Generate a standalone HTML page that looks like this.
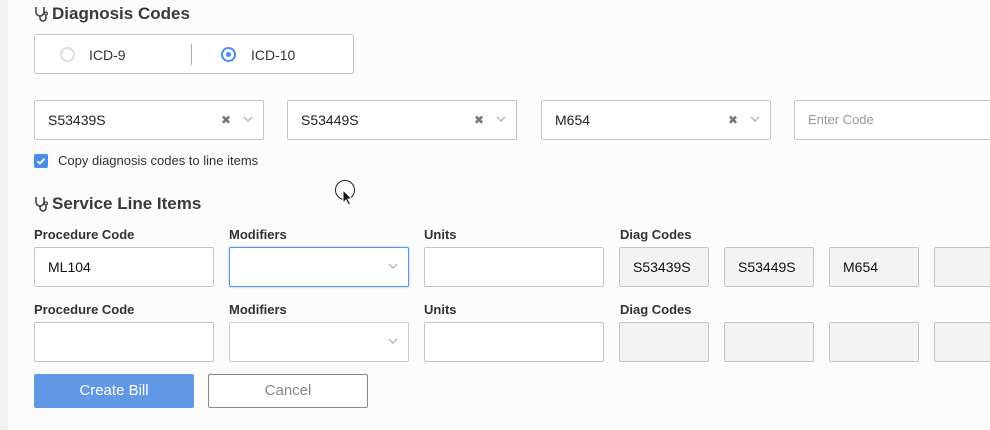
<!DOCTYPE html>
<html><head><style>
*{box-sizing:border-box;margin:0;padding:0}
body{width:990px;height:430px;overflow:hidden;background:#fcfcfc;font-family:"Liberation Sans",sans-serif;color:#333;position:relative}
.strip{position:absolute;left:0;top:0;width:8px;height:430px;background:#f1f1f1}
.a{position:absolute}
.h{font-size:17px;font-weight:bold;color:#3a3a3a;display:flex;align-items:center;gap:4px}
.box{position:absolute;border:1px solid #c4c4c4;border-radius:2px;background:#fff;height:40px}
.sel{font-size:14px;color:#222;padding-left:13px;line-height:38px}
.x{position:absolute;top:0;right:32px;font-size:12px;color:#777;line-height:38px}
.chev{position:absolute;right:10px;top:15px}
.lbl{position:absolute;font-size:13px;font-weight:bold;color:#333}
.g{background:#f3f3f3;height:40px}
.in{font-size:14px;color:#111;padding-left:13px;line-height:38px}
</style></head><body>
<div class="strip"></div>
<svg width="0" height="0" style="position:absolute"><defs>
<symbol id="st" viewBox="0 0 14 16"><path d="M2 1v5a4 4 0 0 0 8 0V1M6 10v2a3 3 0 0 0 6 0V9" fill="none" stroke="#444" stroke-width="1.6"/><circle cx="12" cy="7.5" r="1.5" fill="none" stroke="#444" stroke-width="1.3"/></symbol>
<symbol id="cv" viewBox="0 0 10 6"><path d="M1 1l4 4 4-4" fill="none" stroke="#aaa" stroke-width="1.2"/></symbol>
</defs></svg>
<div class="a h" style="left:34px;top:4px"><svg width="14" height="16"><use href="#st"/></svg>Diagnosis Codes</div>
<div class="box" style="left:34px;top:34px;width:320px;height:40px;border-radius:3px"></div>
<div class="a" style="left:60px;top:47px;width:15px;height:15px;border:2px solid #ddd;border-radius:50%"></div>
<div class="a" style="left:89px;top:47px;font-size:14px">ICD-9</div>
<div class="a" style="left:191px;top:44px;width:1px;height:21px;background:#aaa"></div>
<div class="a" style="left:221px;top:47px;width:15px;height:15px;border:2px solid #4a8ee8;border-radius:50%"></div>
<div class="a" style="left:226px;top:52px;width:5px;height:5px;background:#4a8ee8;border-radius:50%"></div>
<div class="a" style="left:251px;top:47px;font-size:14px">ICD-10</div>

<div class="box sel" style="left:34px;top:100px;width:230px">S53439S<span class="x">✖</span><svg class="chev" width="10" height="6"><use href="#cv"/></svg></div>
<div class="box sel" style="left:287px;top:100px;width:230px">S53449S<span class="x">✖</span><svg class="chev" width="10" height="6"><use href="#cv"/></svg></div>
<div class="box sel" style="left:541px;top:100px;width:230px">M654<span class="x">✖</span><svg class="chev" width="10" height="6"><use href="#cv"/></svg></div>
<div class="box sel" style="left:794px;top:100px;width:210px;color:#999;font-size:13px">Enter Code</div>

<div class="a" style="left:34px;top:154px;width:14px;height:14px;background:#4a8ee8;border-radius:2px"><svg width="14" height="14"><path d="M3.5 7.2l2.3 2.3 4.7-4.7" fill="none" stroke="#fff" stroke-width="1.8"/></svg></div>
<div class="a" style="left:58px;top:153px;font-size:13px">Copy diagnosis codes to line items</div>
<div class="a" style="left:335px;top:180px;width:20px;height:20px;border:1.5px solid #222;border-radius:50%"></div>
<svg class="a" style="left:342px;top:189px" width="12" height="18"><path d="M1 1v13l3-3 2.5 5 2-1-2.5-5h4z" fill="#111" stroke="#fff" stroke-width="1"/></svg>

<div class="a h" style="left:34px;top:194px"><svg width="14" height="16"><use href="#st"/></svg>Service Line Items</div>

<div class="lbl" style="left:34px;top:227px">Procedure Code</div>
<div class="lbl" style="left:229px;top:227px">Modifiers</div>
<div class="lbl" style="left:424px;top:227px">Units</div>
<div class="lbl" style="left:620px;top:227px">Diag Codes</div>
<div class="box in" style="left:34px;top:247px;width:180px">ML104</div>
<div class="box" style="left:229px;top:247px;width:180px;border-color:#5b94e6;box-shadow:0 0 2px #9cc0f2"><svg class="chev" width="10" height="6"><use href="#cv"/></svg></div>
<div class="box" style="left:424px;top:247px;width:180px"></div>
<div class="box g in" style="left:619px;top:247px;width:90px">S53439S</div>
<div class="box g in" style="left:724px;top:247px;width:90px">S53449S</div>
<div class="box g in" style="left:829px;top:247px;width:90px">M654</div>
<div class="box g" style="left:934px;top:247px;width:90px"></div>

<div class="lbl" style="left:34px;top:302px">Procedure Code</div>
<div class="lbl" style="left:229px;top:302px">Modifiers</div>
<div class="lbl" style="left:424px;top:302px">Units</div>
<div class="lbl" style="left:620px;top:302px">Diag Codes</div>
<div class="box" style="left:34px;top:322px;width:180px"></div>
<div class="box" style="left:229px;top:322px;width:180px;border-color:#ccc"><svg class="chev" width="10" height="6"><use href="#cv"/></svg></div>
<div class="box" style="left:424px;top:322px;width:180px"></div>
<div class="box g" style="left:619px;top:322px;width:90px"></div>
<div class="box g" style="left:724px;top:322px;width:90px"></div>
<div class="box g" style="left:829px;top:322px;width:90px"></div>
<div class="box g" style="left:934px;top:322px;width:90px"></div>

<div class="a" style="left:34px;top:374px;width:160px;height:34px;background:#6098e6;border-radius:2px;color:#fff;font-size:15px;text-align:center;line-height:34px">Create Bill</div>
<div class="a" style="left:208px;top:374px;width:160px;height:34px;border:1px solid #888;border-radius:2px;color:#888;font-size:15px;text-align:center;line-height:32px;background:#fff">Cancel</div>
</body></html>
